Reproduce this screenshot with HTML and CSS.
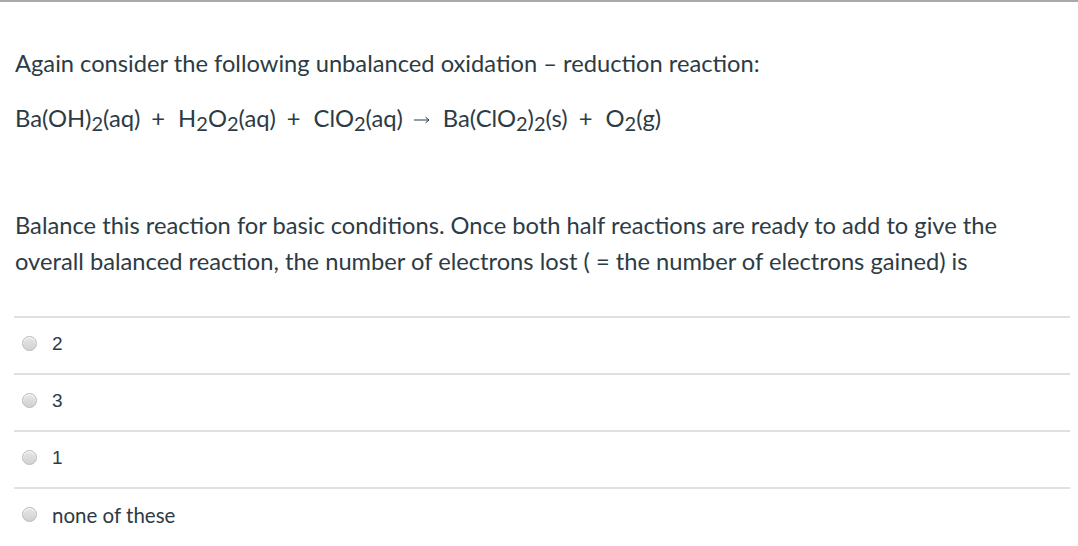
FILE: index.html
```html
<!DOCTYPE html>
<html>
<head>
<meta charset="utf-8">
<link rel="stylesheet" href="styles.css">
</head>
<body>
<div class="topbar"></div>
<div class="question">
  <p class="intro">Again consider the following unbalanced oxidation – reduction reaction:</p>
  <p class="eq">Ba(OH)<sub>2</sub>(aq)<span class="op">+</span>H<sub>2</sub>O<sub>2</sub>(aq)<span class="op">+</span>ClO<sub>2</sub>(aq)<span class="arrow"><svg width="16" height="8" viewBox="0 0 16 8"><path d="M0 4H15M11.5 1.2L15 4L11.5 6.8" fill="none" stroke="#2d3b45" stroke-width="1"/></svg></span>Ba(ClO<sub>2</sub>)<sub>2</sub>(s)<span class="op">+</span>O<sub>2</sub>(g)</p>
  <p class="body">Balance this reaction for basic conditions. Once both half reactions are ready to add to give the overall balanced reaction, the number of electrons lost ( = the number of electrons gained) is</p>
</div>
<div class="answers">
  <div class="answer"><span class="radio"></span><span class="num">2</span></div>
  <div class="answer"><span class="radio"></span><span class="num">3</span></div>
  <div class="answer"><span class="radio"></span><span class="num">1</span></div>
  <div class="answer"><span class="radio"></span><span class="txt">none of these</span></div>
</div>
</body>
</html>
```
FILE: styles.css
```css
html, body {
  margin: 0;
  padding: 0;
  background: #fff;
}
body {
  font-family: Lato, "Liberation Sans", sans-serif;
  color: #2d3b45;
}
.topbar {
  height: 2px;
  background: #a9a9a9;
}
.question {
  padding: 0 15px;
  font-size: 23.7px;
}
.question p {
  margin: 0;
}
.intro {
  padding-top: 46px;
  line-height: 30px;
}
.eq {
  margin-top: 25px !important;
  line-height: 30px;
  white-space: nowrap;
  font-size: 23.8px;
}
.eq sub {
  font-size: 20px;
  vertical-align: -4px;
  line-height: 0;
}
.op {
  display: inline-block;
  margin: 0 13px 0 11px;
}
.arrow {
  display: inline-block;
  margin: 0 13px 0 11px;
}
.arrow svg {
  display: block;
  position: relative;
  top: -3px;
}
.body {
  margin-top: 74px !important;
  line-height: 36px;
}
.answers {
  margin: 37px 8px 0 14px;
}
.answer {
  display: flex;
  align-items: center;
  height: 51px;
  border-top: 2px solid #e0e0e0;
  padding-bottom: 4px;
}
.radio {
  width: 13px;
  height: 13px;
  border-radius: 50%;
  border: 1px solid #b9b9b9;
  background: linear-gradient(#e6e6e6, #d2d2d2);
  margin-left: 8px;
  margin-right: 15px;
  box-shadow: inset 0 1px 1px #fff;
}
.num {
  font-family: "Liberation Sans", Arial, sans-serif;
  font-size: 19px;
}
.txt {
  font-size: 20.5px;
}
```
